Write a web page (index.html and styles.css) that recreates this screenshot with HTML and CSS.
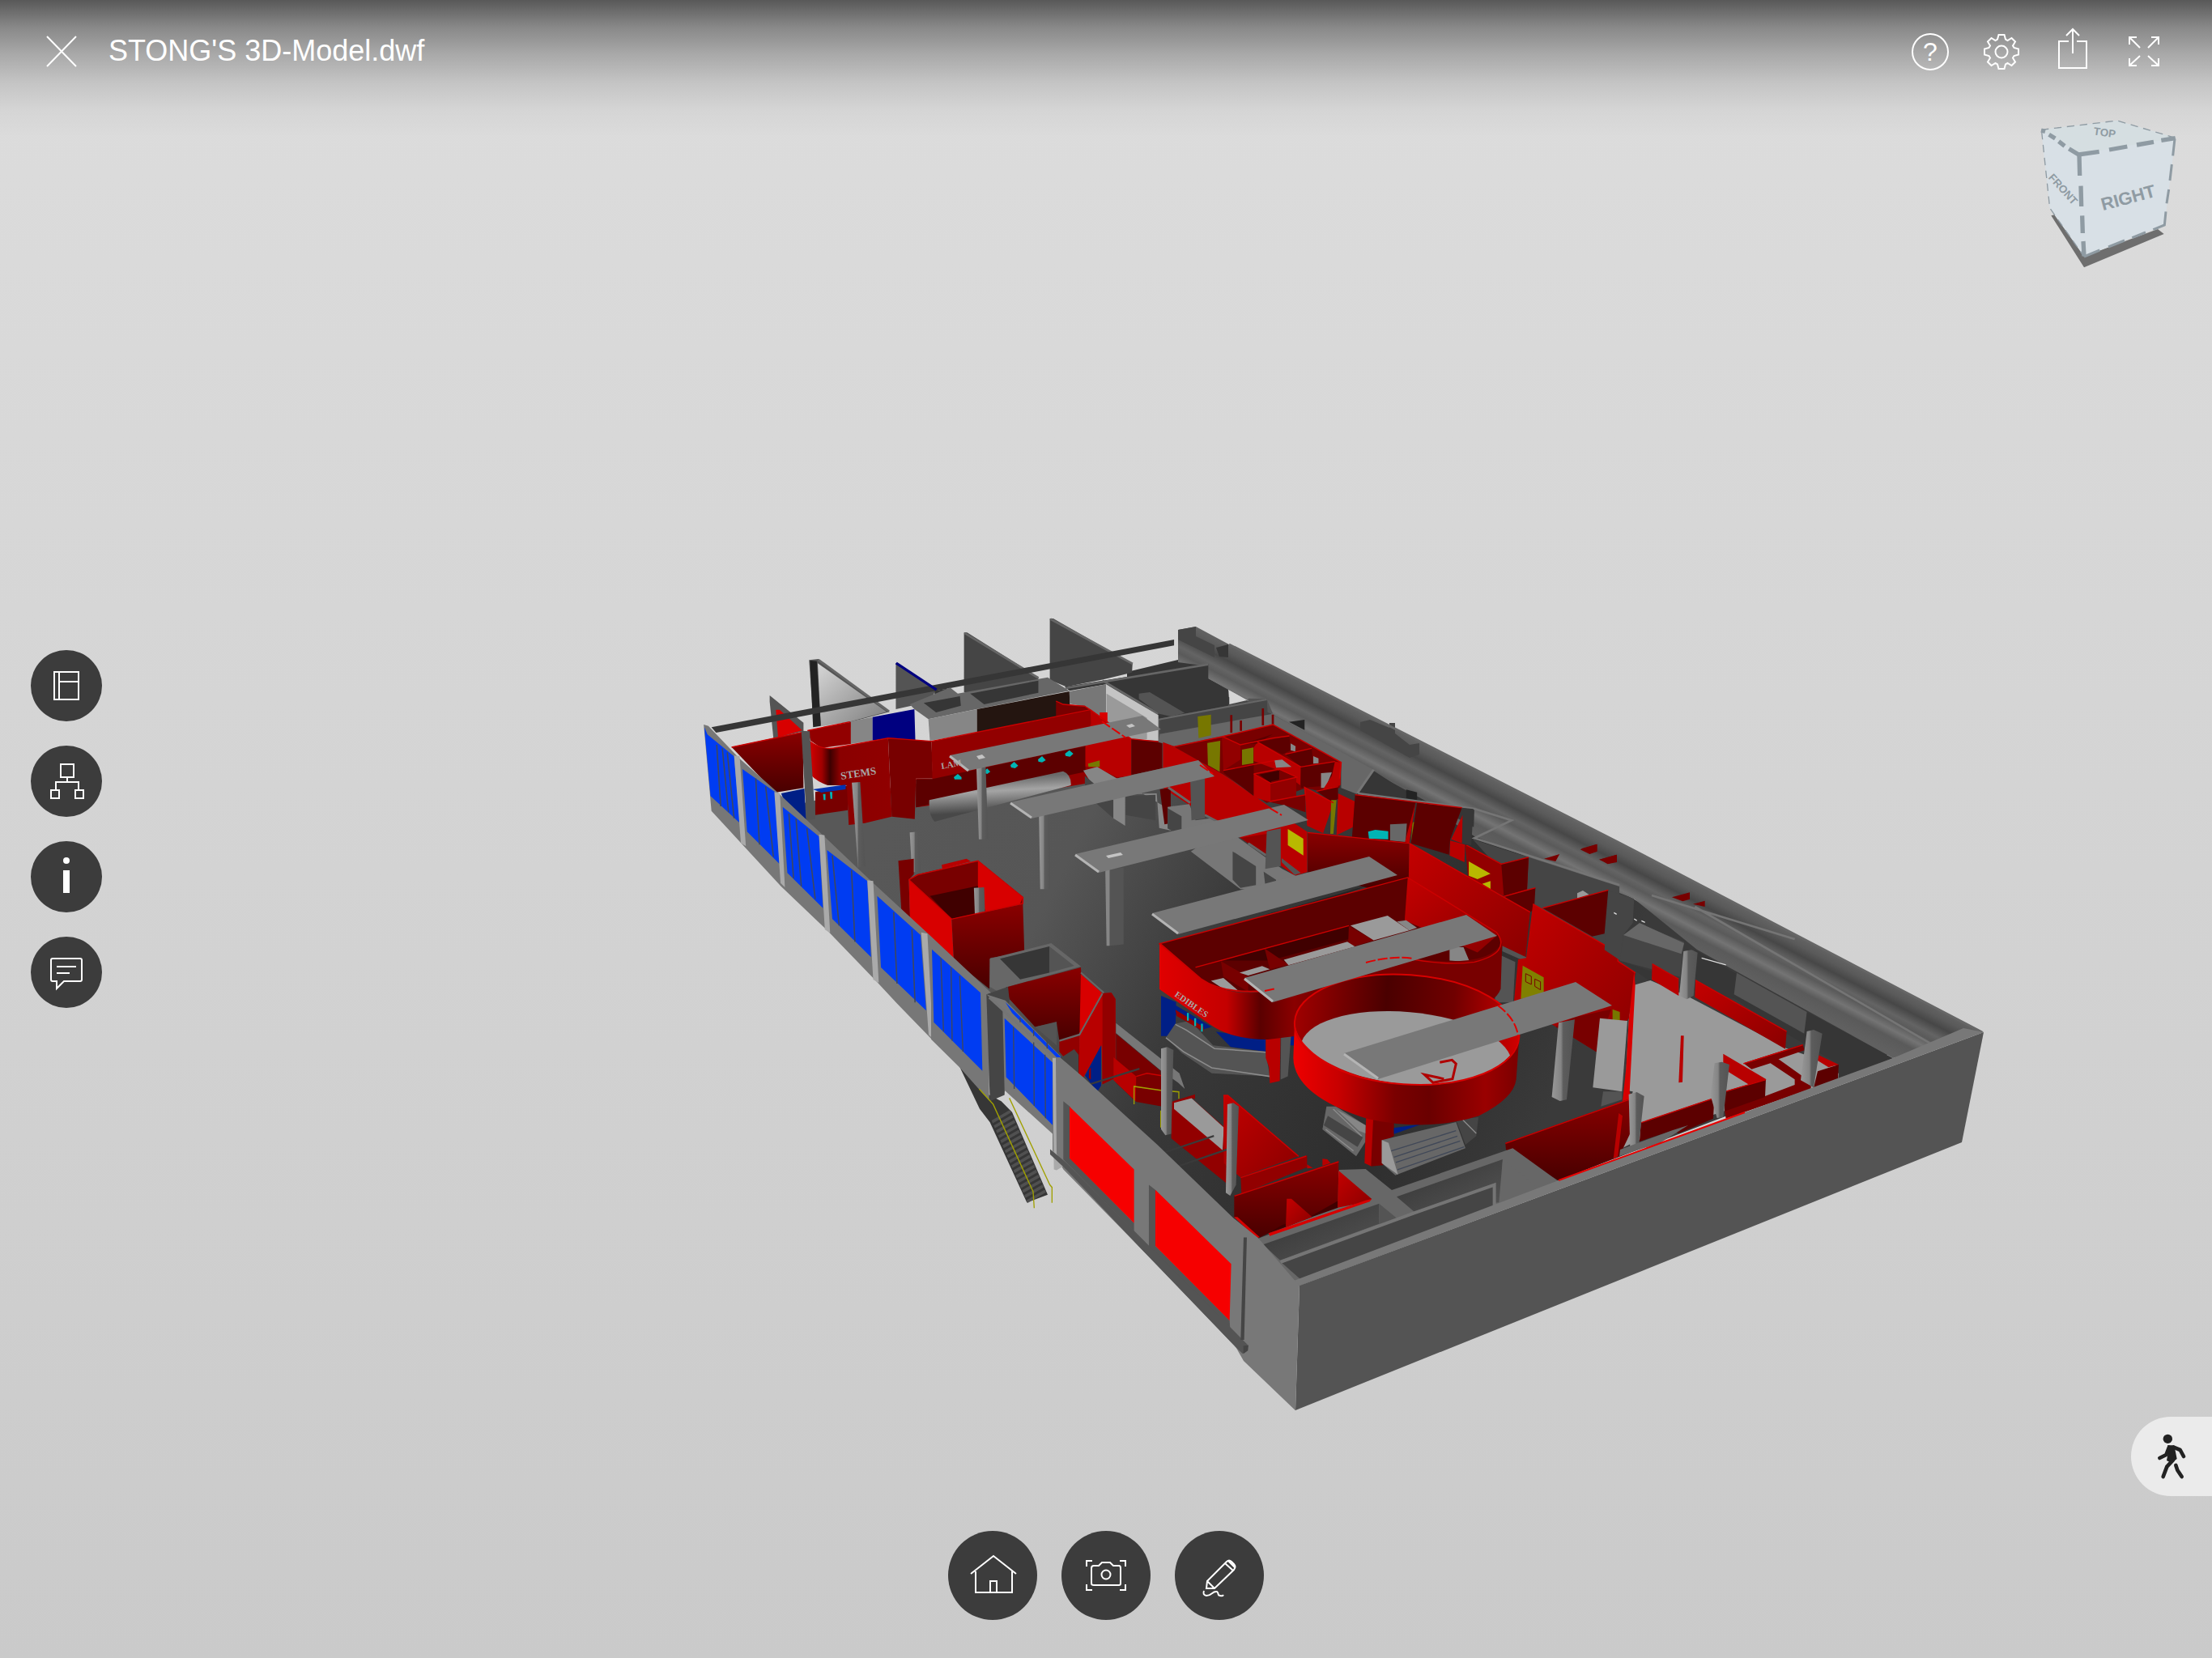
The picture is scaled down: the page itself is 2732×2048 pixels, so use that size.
FILE: index.html
```html
<!DOCTYPE html>
<html lang="en">
<head>
	<meta charset="UTF-8">
	<meta name="viewport" content="width=device-width, initial-scale=1">
	<title>STONG'S 3D-Model.dwf</title>
	<link rel="stylesheet" href="styles.css">
</head>
<body>
<div class="viewer">

<!-- 3D model -->
<svg class="model" viewBox="0 0 2732 2048" role="img" aria-label="3D model of the store">
	<defs>
		<linearGradient id="floor" gradientUnits="userSpaceOnUse" x1="1100" y1="1000" x2="1900" y2="1400">
			<stop offset="0" stop-color="#585858"/><stop offset=".25" stop-color="#565656"/><stop offset=".5" stop-color="#383838"/><stop offset=".8" stop-color="#2e2e2e"/><stop offset="1" stop-color="#3a3a3a"/>
		</linearGradient>
		<linearGradient id="beam" gradientUnits="userSpaceOnUse" x1="1700" y1="889" x2="1666" y2="955">
			<stop offset="0" stop-color="#626262"/><stop offset=".12" stop-color="#5a5a5a"/><stop offset=".26" stop-color="#474747"/><stop offset=".42" stop-color="#646464"/><stop offset=".52" stop-color="#5a5a5a"/><stop offset=".66" stop-color="#747474"/><stop offset=".78" stop-color="#5a5a5a"/><stop offset="1" stop-color="#606060"/>
		</linearGradient>
		<linearGradient id="curve1" x1="0" x2="1" y1="0" y2="0">
			<stop offset="0" stop-color="#d80000"/><stop offset=".16" stop-color="#a00000"/><stop offset=".26" stop-color="#3c0000"/><stop offset=".38" stop-color="#8a0000"/><stop offset="1" stop-color="#900000"/>
		</linearGradient>
		<linearGradient id="curve2" x1="0" x2="1" y1="0" y2="0">
			<stop offset="0" stop-color="#e00000"/><stop offset=".4" stop-color="#c40000"/><stop offset=".6" stop-color="#5a0000"/><stop offset=".8" stop-color="#8a0000"/><stop offset="1" stop-color="#6c0000"/>
		</linearGradient>
		<linearGradient id="ring" x1="0" x2="1" y1="0" y2="0">
			<stop offset="0" stop-color="#ee0000"/><stop offset=".2" stop-color="#c80000"/><stop offset=".45" stop-color="#7a0000"/><stop offset=".6" stop-color="#6a0000"/><stop offset=".85" stop-color="#9a0000"/><stop offset="1" stop-color="#7a0000"/>
		</linearGradient>
		<linearGradient id="ringin" x1="0" x2="1" y1="0" y2="0">
			<stop offset="0" stop-color="#a00000"/><stop offset=".4" stop-color="#4a0000"/><stop offset=".7" stop-color="#700000"/><stop offset="1" stop-color="#d00000"/>
		</linearGradient>
		<linearGradient id="redfall" x1="0" x2="0" y1="0" y2="1">
			<stop offset="0" stop-color="#8a0000"/><stop offset="1" stop-color="#480000"/>
		</linearGradient>
		<linearGradient id="redslope" x1="0" x2="1" y1="0" y2="1">
			<stop offset="0" stop-color="#c40000"/><stop offset="1" stop-color="#8a0000"/>
		</linearGradient>
		<linearGradient id="pipe" x1="0" x2=".15" y1="0" y2="1">
			<stop offset=".2" stop-color="#6a6a6a"/><stop offset=".45" stop-color="#a4a4a4"/><stop offset=".85" stop-color="#484848"/>
		</linearGradient>
		<linearGradient id="post" x1="0" x2="1" y1="0" y2="0">
			<stop offset="0" stop-color="#989898"/><stop offset=".4" stop-color="#848484"/><stop offset=".5" stop-color="#5c5c5c"/><stop offset="1" stop-color="#545454"/>
		</linearGradient>
		<linearGradient id="pane" x1="0" x2="1" y1="0" y2="1">
			<stop offset="0" stop-color="#d6d6d6"/><stop offset="1" stop-color="#7c7c7c"/>
		</linearGradient>
		<linearGradient id="shade" x1="0" x2="1" y1="0" y2="1">
			<stop offset="0" stop-color="#333"/><stop offset="1" stop-color="#555"/>
		</linearGradient>
		<clipPath id="rim"><ellipse cx="563" cy="665" rx="417" ry="203" transform="rotate(4 563 665)"/></clipPath>
	</defs>

	<!-- floor and long wall -->
	<path fill="url(#floor)" d="M930 1010L1000 990L1180 960L1400 900L1455 850L1540 865L1700 940L2000 1100L2338 1300L1950 1448L1605 1588L1540 1520L1290 1300L1100 1150Z"/>
	<path class="g3" d="M1455 778L1492 838L1517 851V872L1460 882L1392 890V830L1455 815Z"/>
	<path fill="url(#beam)" d="M1455 778L1477 774L1518 796L2000 1041L2450 1275L2338 1307L2096 1173L2018 1110L1821 1033L1698 953L1492 838V823L1455 818Z"/>
	<path class="g4" d="M1455 778L1477 774V786L1500 797V812L1455 790Z"/>
	<path class="g3" d="M1502 800L1517 796V812L1506 811Z"/>
	<path class="g4" d="M1680 892L1692 889L1716 899V893L1723 893V906L1741 920L1753 918V932L1741 936L1680 902Z"/>
	<path class="edge6 w3" d="M1518 796L2000 1041L2448 1275"/>

	<!-- north side -->
	<g transform="translate(850 740) scale(.3827 .3333)">
		<path class="g4" d="M1167 72H1178L1434 240L1432 272L1340 298L1220 325L1167 300Z"/>
		<path class="edge6 w8" d="M1169 74L1434 240"/>
		<path class="g4" d="M890 124H900L1130 290L1130 300L900 348L890 345Z"/>
		<path class="edge6 w8" d="M892 126L1130 292"/>
		<path class="g5" d="M670 236V408L780 380L800 335Z"/>
		<path class="g5" d="M390 226L420 222L650 418L525 455L405 470Z"/>
		<path fill="url(#pane)" d="M418 238L640 418L525 453L428 472Z"/>
		<path class="edge6 w8" d="M420 225L648 416"/>
		<path class="g2" d="M393 228L415 230L428 470L403 475Z"/>
		<path class="g5" d="M263 357L372 458V490L275 516L263 380Z"/>
		<path class="rd" d="M283 410L295 410L368 487L290 512Z"/>
		<path class="g3" d="M75 475L1568 150V172L90 495Z"/>
		<path class="navyline" d="M671 237L801 336"/>
		<path class="g3" d="M795 340L835 332V362L795 368Z"/>
		<path class="g6" d="M715 390L845 328L870 350L1160 290L1230 340L930 408L775 445L730 408Z"/>
		<path class="g3" d="M760 385L877 360L880 395L800 420Z"/>
		<path class="g3" d="M910 350L1130 302V347L955 390Z"/>
		<path class="g8" d="M775 445L932 408V495L780 525Z"/>
		<path class="brown" d="M932 408L1230 342L1232 400L1190 440L932 495Z"/>
	</g>
	<g transform="translate(1260 820) scale(.3333)">
		<path class="g3" d="M165 85L697 0V55L772 100L775 150L610 182L515 205L318 76L183 100Z"/>
		<path class="edge6 w8" d="M168 90L697 2M305 62L512 185"/>
		<path class="g5" d="M440 110L480 105L610 182L560 195L515 185L440 130Z"/>
		<path class="g7" d="M183 102L318 76V215L245 158L183 148Z"/>
		<path class="gc" d="M318 76L512 190V285L395 278L318 215Z"/>
		<path class="g9" d="M320 110L470 200V280L395 278L320 215Z"/>
		<path class="sky" d="M775 98L840 135L775 150Z"/>
	</g>
	<g transform="translate(850 740) scale(.3827 .3333)">
		<path fill="url(#redfall)" d="M140 548L370 492L372 700L280 717Z"/>
		<path class="redline" d="M140 549L370 493"/>
		<path class="r9" d="M385 487L525 455V537L430 552L395 525Z"/>
		<path class="g8" d="M525 453L595 437V524L525 537Z"/>
		<path class="bn" d="M595 437L730 408L733 525L645 516L595 524Z"/>
		<path class="r7" d="M410 715L515 690V782L410 800Z"/>
		<path fill="url(#curve1)" d="M388 522Q430 560 470 552L645 515L657 806L570 830L518 837L512 690L450 690Q400 670 392 640Z"/>
		<path class="r7" d="M645 513L785 527L790 665L735 665L731 815L657 806Z"/>
		<path class="r9" d="M785 527L1298 410L1430 518V655L1200 700L735 772V665L788 667Z"/>
		<path class="r5" d="M788 667L1195 565L1282 545V640L735 772V668Z"/>
		<path class="r7" d="M1187 378L1210 390L1280 395L1300 412L1187 437Z"/>
		<path class="rb" d="M1298 410L1430 518V655L1385 660L1320 625L1282 620V545L1300 460Z"/>
		<path class="r5" d="M1430 518L1530 530V628L1430 652Z"/>
		<path class="rd" d="M1328 420H1353V458L1328 440Z"/>
		<path class="redline" d="M388 524Q430 560 470 552L645 515L785 527L1298 410L1430 518L1530 530L1568 550M1187 378L1210 390L1280 397L1300 412M385 487L522 455"/>
		<path class="bd" d="M300 720L375 702L380 817L315 765Z"/>
		<path class="bm" d="M402 705L470 694L508 688V705L430 717Z"/>
		<path class="cy" d="M435 722H443V745H437ZM457 715H465V740H459ZM857 660L870 648L882 660V668H860ZM950 642L965 628L975 640L965 648ZM1040 615L1052 603L1065 617L1055 627L1042 624ZM1129 594L1142 582L1154 597L1142 605L1130 602ZM1216 573L1230 560L1243 573L1232 584L1218 581Z"/>
		<path class="g5" d="M365 488L392 490L410 815L382 818Z"/>
		<path class="yl" d="M1290 610L1328 598V622L1292 622Z"/>
		<path fill="url(#pipe)" d="M778 745L1210 638Q1237 650 1235 690L795 825Q775 800 778 745Z"/>
		<path class="g8" d="M1275 635L1320 622L1568 790V860L1520 848L1512 720L1410 722V840L1372 812Z"/>
		<path class="g4" d="M1412 730L1508 725V820L1412 800ZM1280 655L1372 745V812L1280 720Z"/>
		<path class="g5" d="M1548 770L1568 765V860L1548 850Z"/>
		<path fill="url(#post)" d="M528 680L555 678L572 990L548 995Z"/>
		<path fill="url(#post)" d="M930 620H960L968 890H938Z"/>
		<path fill="url(#post)" d="M1132 800H1165L1168 1075H1136Z"/>
		<path fill="url(#post)" d="M715 865L743 862L750 1015L722 1010Z"/>
		<path class="g5" d="M1360 1000L1405 995V1280L1360 1285Z"/>
		<path class="g8" d="M1346 1000H1360V1285H1350Z"/>
		<path class="r7" d="M678 970L728 962V1020L712 1040L716 1180L688 1155Z"/>
		<path class="rb" d="M818 985L898 962L912 972L820 1000Z"/>
		<path class="r7" d="M712 1040L740 1020L935 970L1080 1105V1130L850 1185Z"/>
		<path class="r3" d="M780 1100L935 1063L990 1150L850 1185Z"/>
		<path class="rd" d="M935 970L1080 1105L1070 1132L960 1160L935 1065Z"/>
		<path fill="url(#post)" d="M922 1070L955 1068L958 1160L925 1168Z"/>
		<path class="rd" d="M712 1038L850 1185L857 1340L716 1190Z"/>
		<path fill="url(#redfall)" d="M850 1185L1080 1130L1085 1310L975 1330L972 1445L857 1338Z"/>
		<path class="redline" d="M712 1040L740 1022L935 970L1080 1105V1128L850 1186L712 1040"/>
		<!-- glass front -->
		<path class="g7" d="M50 465L65 470L165 590L290 718L430 870L590 1045L770 1235L960 1440L1015 1500L940 1710L784 1629L675 1500L610 1420L455 1235L300 1065L175 910L75 785Z"/>
		<path class="bl" d="M52 475L62 502L148 583L167 830L72 730ZM175 630L280 715L295 982L190 862ZM305 770L422 880L435 1145L320 1015ZM448 930L578 1045L590 1327L465 1185ZM610 1100L750 1245L768 1525L622 1365Z"/>
		<path class="mull" d="M92 540L105 768M110 553L130 790M126 568L148 812M218 665L230 910M250 695L275 955M325 795L340 1035M348 815L365 1065M383 850L410 1112M465 950L487 1210M527 1005L538 1270M663 1160L674 1425M722 1225L732 1495"/>
		<path class="ga" d="M148 580L166 582L186 915L170 905ZM278 715L296 720L312 1068L298 1052ZM422 872L440 875L458 1237L441 1225ZM578 1042L597 1045L615 1422L597 1410ZM752 1235L772 1240L790 1630L776 1615Z"/>
	</g>

	<!-- back rooms -->
	<g transform="translate(1400 740) scale(.3827 .3333)">
		<path class="g5" d="M370 368L430 370L450 425L370 400Z"/>
		<path class="g4" d="M85 445L430 370L433 425L85 500Z"/>
		<path class="g6" d="M85 500L450 425V468L130 545L80 530Z"/>
		<path class="edge6 w6" d="M82 446L430 372"/>
		<path class="g6" d="M450 428L775 632L720 722L670 700V605L450 465Z"/>
		<path class="g3" d="M778 645L1098 845L1100 778L915 745L725 720Z"/>
		<path class="g2" d="M880 706L915 716V745L880 738ZM502 455L552 447V485Z"/>
		<path class="edge7 w8" d="M725 720L1100 777L1220 820L1100 886L1260 945L1568 1060M775 632L722 720"/>
		<path class="g4" d="M1095 890L1568 1065V1330L1290 1150L1180 1000Z"/>
		<path class="g3" d="M1060 773L1097 778L1090 912L1060 905Z"/>
		<path class="rb" d="M95 530L130 545L290 650L440 770L560 862V1012L520 1025L430 950L345 885L230 800L95 700Z"/>
		<path class="r5" d="M85 705L120 700V830L100 835Z"/>
		<path class="r7" d="M130 547L285 510L450 465L670 605L665 700L600 712L555 700L430 755L290 650Z"/>
		<path class="r9" d="M285 508L345 540V595L290 635Z"/>
		<path class="rb" d="M400 530L540 622L538 690L480 640L388 600V550Z"/>
		<path class="r5" d="M405 530L503 507L508 560L480 575ZM490 575L575 553L580 610L540 622ZM345 540L450 500L400 535ZM540 622L650 602L640 690L540 700ZM290 635L388 612V730L292 645Z"/>
		<path class="g8" d="M507 535L523 545L522 565L507 560ZM580 582L597 590V608L580 610ZM455 598L480 595L510 622L460 625ZM605 645L640 642L620 700H605Z"/>
		<path class="rb" d="M388 648L443 683V752L388 735ZM650 602L670 605L668 690L610 708L640 655Z"/>
		<path class="r9" d="M443 683L525 660V735L443 752Z"/>
		<path class="r3" d="M405 650L470 635V672L443 682Z"/>
		<path class="r7" d="M470 632L525 660L443 683L445 675L475 668Z"/>
		<path class="r7" d="M440 752L555 725V790L490 765Z"/>
		<path class="rb" d="M552 698L645 755L612 868L560 840ZM660 720L715 750L708 845L655 875Z"/>
		<path class="r5" d="M590 712L660 697V740L640 752Z"/>
		<path class="yl" d="M207 435L250 428V505L210 515ZM238 533L280 525L278 640L240 615ZM350 558L387 550V608L350 615ZM638 745H655L645 870H635ZM900 828L908 825L903 905H896Z"/>
		<path class="r7" d="M312 430H319V495H312ZM414 405H421V468H414ZM343 450H350V488H343ZM446 428H453V465H446Z"/>
		<path class="redline" d="M130 547L285 510L450 465L670 605L665 665M285 508L345 540L450 515L503 507M400 530L540 622L650 602M490 575L575 553M290 635L455 598M388 648L470 630L527 660L443 683L388 648M440 750L555 725L552 698L645 755M590 712L660 695"/>
		<path class="r5" d="M715 725L910 752L890 905L705 885ZM915 755L1060 773L1022 890L1018 947L895 905Z"/>
		<path class="cy" d="M757 862L780 855L822 860V890L760 888Z"/>
		<path class="g6" d="M828 835L882 832L878 900L828 895Z"/>
		<path class="rb" d="M910 755L890 905L876 900ZM1062 800L1060 905L1025 890ZM1022 895L1070 910L1068 975L1020 950Z"/>
		<path class="redline" d="M715 725L910 752L1060 773"/>
		<path class="r9" d="M1070 910L1187 980L1275 957L1270 1080L1195 1100L1080 1035Z"/>
		<path class="r5" d="M1187 982L1275 957L1270 1075L1195 1100ZM1195 1102L1297 1070L1293 1150L1280 1160ZM1320 1145L1532 1078L1520 1240L1480 1250Z"/>
		<path class="yb" d="M1082 972L1152 1018L1110 1038L1082 1025ZM1125 1055L1152 1045V1075Z"/>
		<path class="redline" d="M1075 912L1187 982L1275 957M1195 1102L1297 1070M1320 1145L1532 1078"/>
		<path class="r7" d="M1445 925L1495 908V935L1470 942ZM1505 965L1560 947V975L1530 982ZM1325 962L1375 945L1362 972Z"/>
		<path class="g9" d="M1432 1090L1450 1080L1470 1095L1432 1108Z"/>
		<!-- display shelves below the wall -->
		<path class="g7" d="M110 770L180 760L200 820L250 812L430 960L480 1000L530 1030L460 1080L345 1075L185 935L230 900L110 850Z"/>
		<path class="g4" d="M320 935L395 990V1060L345 1070L320 1040ZM420 1010L460 1040V1060L425 1060ZM110 775L155 805V880L110 850Z"/>
		<path class="r9" d="M345 885L430 870L428 950Z"/>
		<path class="edge6 w8" d="M112 698L183 755M230 800L280 830M370 905L428 950"/>
		<path class="g5" d="M183 670L230 665V812L187 820Z"/>
		<path class="g5" d="M430 860L475 850V990L425 1000Z"/>
		<path class="rb" d="M478 880L500 850L560 862V1012L478 975Z"/>
		<path class="yb" d="M498 852L548 888V950L498 912Z"/>
		<path class="g5" d="M478 960L540 1015L520 1022L478 975Z"/>
		<path fill="url(#redfall)" d="M562 865L890 905L888 1040L760 1072L562 1012Z"/>
		<path class="redline" d="M562 865L890 905"/>
		<path fill="url(#redslope)" d="M890 905L1280 1160L1265 1328L1185 1290L888 1035Z"/>
		<path class="redline" d="M890 905L1280 1160"/>
		<path class="g5" d="M1190 1285L1268 1328V1345L1190 1305Z"/>
		<path class="g5" d="M1185 1320L1232 1345L1225 1495H1165Z"/>
		<path class="g2" d="M400 1180L640 1100L760 1060L640 1110L450 1160Z"/>
	</g>

	<!-- right wing -->
	<g transform="translate(1550 1050) scale(.3333)">
		<path fill="url(#redslope)" d="M1030 200L1345 380V412L1410 455L1385 625L1265 748L1115 655L960 560L975 405L1005 400Z"/>
		<path class="r7" d="M1115 655L1180 620L1320 590L1265 748Z"/>
		<path class="redline" d="M1030 200L1345 380V412L1410 455"/>
		<path class="yb dim" d="M992 428L1070 472V530L985 552Z"/>
		<path class="hollow" d="M1003 458L1024 468V498L1003 488ZM1037 478L1058 488V518L1037 505Z"/>
		<path class="yl" d="M1325 590L1352 600V630H1325Z"/>
	</g>
	<g transform="translate(1950 1000) scale(.3333)">
		<path class="g4" d="M110 300L205 330L200 420L165 465L155 560L95 520Z"/>
		<path class="g3" d="M155 560L270 600L380 640L430 520L585 610L845 750L1165 922L960 1005L965 945L770 830L575 700L270 640Z"/>
		<path class="g5" d="M585 605L845 750L835 830L575 685Z"/>
		<path class="g4" d="M165 465L225 425L390 490L375 620L152 560Z"/>
		<path class="g6" d="M165 465L225 420L390 495L380 535Z"/>
		<path class="edge7 w8" d="M270 318L800 480M430 360L1300 865"/>
		<path class="r7" d="M5 148L68 128V155L40 165ZM75 185L140 167V192L110 200ZM345 325L411 307V332L385 340ZM423 350L467 338V360Z"/>
		<path class="spark" d="M130 382L140 388M205 405L215 412M232 412L245 418M455 550L545 576"/>
		<path class="g9" d="M205 650L265 633L400 690L770 885L960 950L870 1030L690 1065L500 1130L230 1220L150 1260L200 1045L172 1040L185 780Z"/>
		<path class="g9" d="M78 773L180 783L160 1045L52 1030Z"/>
		<path class="g5" d="M90 1045L160 1045V1075L82 1100Z"/>
		<path class="rb" d="M272 572L370 630V690L270 630Z"/>
		<path fill="url(#redslope)" d="M432 632L770 822L765 887L430 695Z"/>
		<path class="redline" d="M272 572L370 628M432 632L770 822"/>
		<path class="rd" d="M205 600L209 650L188 1048L200 1070L162 1080L175 960L185 780Z"/>
		<path class="rb" d="M378 838H389L384 1010L370 1012Z"/>
		<path class="r7" d="M610 940L830 870L836 892L740 925L860 1010V1035L545 1145L540 1115L690 1062L800 1020V1000L710 940L640 962Z"/>
		<path class="r5" d="M885 970L963 945L960 1000L870 1032Z"/>
		<path class="rb" d="M885 908L963 945L925 955L885 930ZM535 905L695 1000L640 1025L535 960Z"/>
		<path class="r5" d="M540 1045L693 1000L690 1065L540 1118ZM230 1160L502 1068L498 1145L370 1200L345 1190L225 1230Z"/>
		<path class="redline" d="M610 942L830 872M540 1046L693 1001M232 1160L502 1069"/>
		<path fill="url(#post)" d="M388 525L418 520L440 530L425 690L400 703L372 690Z"/>
		<path fill="url(#post)" d="M845 822L870 816L902 830L870 1030L822 1003Z"/>
		<path fill="url(#post)" d="M503 940L530 935L558 945L535 1140L512 1143L488 1060Z"/>
	</g>

	<!-- Edibles counter -->
	<g transform="translate(1150 1100) scale(.3333 .3827)">
		<path class="bd" d="M852 340L908 360L905 470L852 470ZM905 370L1040 440L1000 450L905 400ZM1055 455L1240 480V520L1110 505ZM1327 455H1345V500H1327Z"/>
		<path class="g5" d="M905 430L960 420L1045 500L1240 520L1255 600L1040 590L930 525L870 475Z"/>
		<path class="lightline" d="M905 432L945 450L1050 510L1240 522M870 475L935 520L1040 572L1255 600"/>
		<path class="r9" d="M905 385L1010 440L1010 455L910 405Z"/>
		<path class="cy" d="M948 395H955V420H948ZM975 412H982V438H975ZM1000 430H1007V455H1000Z"/>
		<path class="g5" d="M1297 455H1335L1322 600L1295 610Z"/>
		<path class="rb" d="M1240 475L1295 460L1292 615L1255 622L1252 570L1240 540Z"/>
	</g>
	<g transform="translate(1400 740) scale(.3827 .3333)">
		<path class="r5" d="M82 1278L885 1032L1175 1235Q1215 1310 1100 1345Q1000 1360 870 1330L450 1450Q300 1470 230 1420Z"/>
		<path class="r3" d="M200 1365L695 1210V1260L440 1340L290 1340Z"/>
		<path fill="url(#redslope)" d="M885 1032L1180 1240L1110 1310L875 1190Z"/>
		<path class="r7" d="M695 1212L775 1265L700 1290L693 1270ZM423 1295L500 1355L440 1372ZM282 1342L370 1400V1455L290 1400Z"/>
		<path class="g9" d="M700 1210L820 1173L890 1228L775 1265ZM485 1337L690 1270L715 1288L500 1357ZM342 1385L415 1360L440 1372L370 1395ZM250 1415L290 1404L342 1455L290 1445Z"/>
		<path class="g8" d="M850 1195L880 1190L915 1218L890 1228ZM1020 1290H1065L1085 1345L1020 1340Z"/>
		<path class="r7" d="M870 1328Q1150 1375 1190 1270L1185 1445Q1175 1475 1150 1490L600 1490L560 1440Z"/>
		<path class="redline" d="M82 1278L885 1032L1172 1235Q1220 1310 1100 1345Q1000 1360 870 1328M200 1365L695 1210"/>
	</g>
	<path fill="url(#curve2)" d="M1432 1165L1483 1209Q1510 1228 1550 1226L1600 1211L1640 1230V1275L1566 1284Q1520 1284 1494 1265L1432 1222Z"/>
	<path class="redline" d="M1432 1165L1483 1209Q1510 1228 1562 1224"/>

	<!-- round bar -->
	<g transform="translate(1550 1050) scale(.3333)">
		<path class="g6" d="M265 950L300 950L410 1020V1080L375 1135L250 1035Z"/>
		<path class="g4" d="M745 1000L828 990L820 1060L780 1092ZM270 985L400 1065L380 1100L255 1020Z"/>
		<path class="lightline" d="M290 960L395 1060M262 1035L365 1115M770 1000L820 1050"/>
		<path class="g8" d="M300 960L410 1020V1050L385 1040Z"/>
		<path class="rb" d="M412 985L440 1000L432 1172L406 1160Z"/>
		<path class="r7" d="M438 1000L515 1010V1060L475 1080V1168L430 1172Z"/>
		<path class="bd" d="M515 1030L620 1015L515 1052Z"/>
		<ellipse fill="url(#ringin)" cx="563" cy="665" rx="417" ry="203" transform="rotate(4 563 665)"/>
		<g clip-path="url(#rim)"><ellipse class="g9" cx="560" cy="760" rx="392" ry="160" transform="rotate(5 560 760)"/></g>
		<path class="redoutline" d="M685 787L730 778L745 792L732 848L660 862L628 832L700 848"/>
		<path fill="url(#ring)" d="M147 640C160 770 390 870 620 870C820 870 975 790 980 680L968 850Q960 920 830 985Q640 1045 420 997Q145 910 142 770Z"/>
		<ellipse class="redring" cx="563" cy="665" rx="417" ry="203" transform="rotate(4 563 665)"/>
		<path class="g6" d="M470 1075L745 1008L780 1105L520 1205L470 1160Z"/>
		<path class="g9" d="M470 1075L495 1085L530 1203L470 1160Z"/>
		<path class="mull" d="M505 1115L745 1040M515 1138L750 1060M522 1158L760 1078M528 1185L775 1100"/>
		<path fill="url(#post)" d="M1125 640L1185 628L1155 925L1130 930L1100 915Z"/>
		<path fill="url(#redfall)" d="M928 1085L1400 918L1395 1040L1350 1135L1125 1225L930 1110Z"/>
		<path class="rb" d="M1348 975L1362 985L1345 1135L1328 1145Z"/>
		<path class="redline" d="M928 1087L1400 920"/>
		<path fill="url(#post)" d="M1385 905L1415 897L1442 912L1422 1095L1390 1102Z"/>
	</g>

	<!-- ceiling panels -->
	<path class="slab" d="M1173 933L1411 884L1434 901L1196 952ZM1248 991L1480 939L1500 959L1274 1011ZM1328 1055L1586 994L1616 1013L1357 1078ZM1423 1128L1691 1058L1726 1081L1455 1154ZM1537 1208L1811 1130L1849 1156L1572 1238ZM1660 1301L1946 1213L1991 1242L1702 1333Z"/>
	<path class="slabedge" d="M1173 934L1196 952M1248 992L1274 1010M1328 1056L1357 1077M1423 1129L1455 1153M1537 1209L1572 1237M1660 1302L1702 1332"/>
	<path class="gc" d="M1206 934L1213 932L1217 936L1209 938ZM1391 896L1398 894L1402 897L1395 899ZM1366 1057L1384 1053L1387 1056L1369 1060Z"/>
	<path class="redline dash" d="M1361 891L1390 911M1482 945L1498 956M1568 998L1583 1007M1687 1189Q1720 1180 1745 1184M1850 1242Q1872 1258 1875 1280M1562 1224L1576 1221"/>

	<!-- entrance -->
	<g transform="translate(1150 1100) scale(.3333 .3827)">
		<path class="g6" d="M217 220L445 170L555 245L278 312L285 345L217 310Z"/>
		<path class="g3" d="M255 220L438 180V265L330 287Z"/>
		<path class="g5" d="M438 180L530 243L438 265Z"/>
		<path fill="url(#redfall)" d="M278 312L555 248L565 420L550 465L475 485L465 425L385 440L290 350Z"/>
		<path class="g5" d="M385 440L465 423V500Z"/>
		<path class="rd" d="M555 270L635 332L550 465Z"/>
		<path class="r9" d="M475 485L550 465V600L475 520Z"/>
		<path class="rb" d="M635 332L668 330L683 350V605L635 625L632 500L565 602L548 600L550 465Z"/>
		<path class="r9" d="M635 332L668 330L683 350V605L635 625Z"/>
		<path class="edge6 w6" d="M635 332L550 465L475 485M555 265L640 330"/>
		<path class="bd" d="M570 597L630 500V630L615 650Z"/>
		<path class="r9" d="M585 580L592 570V610L585 605Z"/>
		<path class="g7" d="M685 428L920 590L940 640L915 620L850 580L685 460Z"/>
		<path class="r7" d="M685 462L850 582L860 698L760 682L685 620Z"/>
		<path class="rb" d="M676 538L760 600L758 680L676 612Z"/>
		<path class="redline" d="M760 600L800 590L855 598"/>
		<path class="yellowline" d="M752 690V632L850 645L918 650V672M851 710V765"/>
		<path class="r9" d="M890 682L978 658V672L965 670L1095 770V945L890 800Z"/>
		<path class="g9" d="M900 685L965 670L1085 765L1080 838L900 705Z"/>
		<path fill="url(#redslope)" d="M1083 660L1100 660L1362 858L1145 925L1085 880Z"/>
		<path class="redline" d="M1083 662L1100 662L1362 858"/>
		<path class="rod" d="M590 625L772 575M862 846L1048 792M915 890L1105 833"/>
		<path fill="url(#post)" d="M852 510L875 505L898 515L890 785L868 790L852 770Z"/>
		<path fill="url(#post)" d="M1098 690L1120 685L1140 697L1130 950L1108 985L1092 975Z"/>
	</g>

	<!-- south rooms -->
	<g transform="translate(1500 1370) scale(.3333)">
		<path class="g6" d="M462 225L560 222L657 300L1105 145L1275 268L1320 280L315 655L160 480L200 465L400 380Z"/>
		<path class="r9" d="M97 252L343 172V215L100 315Z"/>
		<path class="rb" d="M400 184L418 186L430 200L400 210ZM343 205L365 218L343 220Z"/>
		<path fill="url(#redfall)" d="M73 322L460 193L458 360L200 460L165 477L73 400Z"/>
		<path class="r3" d="M200 460L365 398L458 365V340L360 395L250 430Z"/>
		<path fill="url(#redslope)" d="M460 228L583 333L560 345L456 365Z"/>
		<path fill="url(#redslope)" d="M268 332L285 332L362 400L264 438Z"/>
		<path class="rd" d="M72 400L85 400L168 475L155 478ZM200 460L560 338L583 333L575 343L205 470Z"/>
		<path class="redline" d="M97 254L340 174M74 322L460 195"/>
		<path fill="url(#shade)" d="M180 502L610 350V425L243 560Z"/>
		<path class="g5" d="M610 350L680 408L610 430Z"/>
		<path fill="url(#shade)" d="M675 325L1068 186L1060 345L740 380Z"/>
		<path class="g6" d="M1068 186L1210 300L1053 358Z"/>
		<path class="g4" d="M250 570L740 385L1035 283V365L318 630Z"/>
		<path class="edge7 w12" d="M245 567L740 385L1037 281V362"/>
	</g>

	<!-- outer walls -->
	<path class="g6" d="M2001 1420L2066 1396L2085 1390L2050 1412L2000 1428Z"/>
	<path class="g5" d="M1605 1588L2450 1275L2423 1411L1600 1742Z"/>
	<path class="slab" d="M1598 1582L1925 1458L2338 1307L2425 1270L2450 1275L1605 1588Z"/>
	<path class="redfront" d="M1925 1458L2155 1374"/>
	<g transform="translate(1150 1100) scale(.3333 .3827)">
		<path class="g3" d="M105 568L215 660L260 680L300 715L432 982L355 1007L218 748L180 705Z"/>
		<path class="stairs" d="M258 725L394 996"/>
		<path class="g7" d="M0 155L215 330V678L105 570L0 480Z"/>
		<path class="bl" d="M3 190L183 330L190 582L10 425Z"/>
		<path class="mull" d="M36 218L46 455M74 248L78 485M106 275L118 520"/>
		<path class="g4" d="M205 335L285 310L290 350L272 660L218 680Z"/>
		<path class="g7" d="M205 335L275 355L480 535L450 785L272 645L265 385Z"/>
		<path class="bl" d="M272 412L450 555V757L278 602ZM275 360L482 538H465L300 395Z"/>
		<path class="edge7 w8" d="M215 345L465 545"/>
		<path class="mull" d="M305 440L308 640M380 490L382 695M422 530L424 735M330 410V425M380 450V470M430 485V510"/>
		<path class="g4" d="M480 540L530 512L546 530V600Z"/>
		<path class="slab" d="M450 540L480 540L560 600L840 822L1120 1057L1210 1120L1365 1275L1350 1678L1158 1518L1130 1475L850 1220L760 1140L490 900L450 840Z"/>
		<path class="ga" d="M450 540L462 540L465 850L490 890L465 903L455 900Z"/>
		<path class="g5" d="M490 680L515 698V865L752 1073V1100L490 868ZM807 950L831 966V1147L1106 1388L1108 1412L1090 1410L807 1150Z"/>
		<path class="rf" d="M513 698L752 900V1073L513 864ZM831 966L1112 1205L1106 1388L831 1147Z"/>
		<path class="g5" d="M441 835L500 878L1172 1465V1482L1155 1495L1130 1475L760 1140L500 900L441 852Z"/>
		<path class="g4" d="M1158 1120H1170L1160 1450H1147ZM1157 1470L1176 1467L1174 1485L1157 1495Z"/>
		<path class="yellowline" d="M178 640L230 690L378 972L382 1025M290 670L440 950L448 958V1008"/>
	</g>
	<text class="sign" font-size="13" transform="translate(1039 963) rotate(-9)">STEMS</text>
	<text class="sign" font-size="11" transform="translate(1163 950) rotate(-10)">LAM</text>
	<text class="sign" font-size="11" transform="translate(1450 1230) rotate(35)">EDIBLES</text>
</svg>

<header class="topbar">
	<button class="tool" type="button" aria-label="Close"><svg viewBox="0 0 64 64"><path d="M14 13L50 50M50 13L14 50"/></svg></button>
	<h1 class="title">STONG'S 3D-Model.dwf</h1>
	<button class="tool" type="button" aria-label="Help"><span class="help">?</span></button>
	<button class="tool" type="button" aria-label="Settings"><svg viewBox="-32 -32 64 64"><path d="M-3.500-21H3.500L5-15.500L7.500-14L12.500-17L17-12.500L14-7.500L15.500-5L21-3.500V3.500L15.500 5L14 7.500L17 12.500L12.500 17L7.500 14L5 15.500L3.500 21H-3.500L-5 15.500L-7.500 14L-12.500 17L-17 12.500L-14 7.500L-15.500 5L-21 3.500V-3.500L-15.500-5L-14-7.500L-17-12.500L-12.500-17L-7.500-14L-5-15.500Z"/><circle r="7.500"/></svg></button>
	<button class="tool" type="button" aria-label="Share"><svg viewBox="0 0 64 64"><path d="M27 19H15V52H49V19H37M32 34V4M24 12L32 4L40 12"/></svg></button>
	<button class="tool" type="button" aria-label="Full screen"><svg viewBox="0 0 64 64"><path d="M27 27L14 14M14 23V14H23M37 27L50 14M41 14H50V23M27 37L14 49M14 40V49H23M37 37L50 49M50 40V49H41"/></svg></button>
</header>

<nav class="sidebar" aria-label="Panels">
	<button class="round" type="button" aria-label="Sheets"><svg viewBox="0 0 88 88"><path d="M29 27H59V61H29ZM35 27V61M35 39H59"/></svg></button>
	<button class="round" type="button" aria-label="Model tree"><svg viewBox="0 0 88 88"><path d="M37 23H53V39H37ZM45 39V45M31 54V45H59V54M25 55H35V65H25ZM55 55H65V65H55Z"/></svg></button>
	<button class="round" type="button" aria-label="Properties"><svg viewBox="0 0 88 88"><g class="solid"><circle cx="44" cy="24" r="4"/><path d="M40 36H48V64H40Z"/></g></svg></button>
	<button class="round" type="button" aria-label="Comments"><svg viewBox="0 0 88 88"><path d="M27 27H61Q63 27 63 29V53Q63 55 61 55H41L32 64V55H27Q25 55 25 53V29Q25 27 27 27ZM32 37H56M32 45H48"/></svg></button>
</nav>

<aside class="side">
	<button class="cube" type="button" aria-label="View cube">
		<svg viewBox="600 445 510 555">
			<path class="shadow" d="M640 800L652 797L765 950L1035 850L1058 868L762 992Z"/>
			<path class="face" d="M603 482L885 448L1100 512L1060 835L762 952L635 772Z"/>
			<path class="topface" d="M603 482L885 448L1100 512L745 572Z"/>
			<g class="edges">
				<path class="thin" d="M603 482L885 448L1100 512"/>
				<path class="thin" d="M605 490L635 772L762 952"/>
				<path class="thick" d="M603 484L618 488M632 500L655 514M668 525L690 542M706 552L742 574L818 563M855 556L922 544M957 538L1020 527M1048 521L1100 513"/>
				<path class="thick" d="M744 575L746 652M750 690L752 766M755 800L757 865M759 895L762 950"/>
				<path class="mid" d="M1098 515L1091 578M1087 610L1080 670M1076 703L1068 755M1065 785L1060 835L1018 852M990 862L940 882M912 892L852 916M820 928L762 952"/>
			</g>
			<text font-size="66" transform="translate(832 782) rotate(-15)">RIGHT</text>
			<text font-size="40" transform="translate(628 660) rotate(48)">FRONT</text>
			<text font-size="40" transform="translate(796 500) rotate(8)">TOP</text>
		</svg>
	</button>
	<button class="walk" type="button" aria-label="First person view">
		<svg viewBox="96 90 300 294">
			<circle cx="232" cy="172" r="17"/>
			<path d="M231 196H256L266 246L246 262L228 252L233 225Z"/>
			<path class="limb" d="M237 203L226 231L202 243M254 203L278 213L291 237M252 250L229 275L215 312M262 270L268 288L284 312"/>
		</svg>
	</button>
</aside>

<footer class="dock">
	<button class="round big" type="button" aria-label="Home view"><svg viewBox="0 0 110 110"><path d="M28 53L56 31L84 53M34 50V76H79V50M52 76V62H60V76"/></svg></button>
	<button class="round big" type="button" aria-label="Snapshot"><svg viewBox="0 0 110 110"><path d="M31 44V37H38M72 37H79V44M31 66V73H38M72 73H79V66M40 43H46L50 39H60L64 43H71Q73 43 73 46V65Q73 67 71 67H40Q37 67 37 65V46Q37 43 40 43Z"/><circle cx="55" cy="54" r="5.500"/></svg></button>
	<button class="round big" type="button" aria-label="Markup"><svg viewBox="0 0 110 110"><path d="M40 62L64 38Q67 35 70 38L73 41Q76 44 73 48L49 71H39ZM40 62L49 71M62 40L72 49M66 37L74 45"/><path d="M36 74Q34 79 39 80C46 80 46 74 52 75C55 77 52 80 56 80Q59 81 60 79"/></svg></button>
</footer>

</div>
</body>
</html>
```
FILE: styles.css
```css
* {
	margin: 0;
	padding: 0;
	box-sizing: border-box;
}
body {
	font-family: "Liberation Sans", Arial, sans-serif;
	background: #cacaca;
}
button {
	border: 0;
	background: none;
	font: inherit;
	color: inherit;
	cursor: pointer;
}
svg {
	display: block;
}
.viewer {
	position: relative;
	min-height: 100vh;
	display: grid;
	grid-template-columns: auto 1fr auto;
	grid-template-rows: auto 1fr auto;
	overflow: hidden;
	background:
		linear-gradient(rgba(0,0,0,.6), rgba(0,0,0,.38) 20%, rgba(0,0,0,.23) 40%, rgba(0,0,0,.11) 60%, rgba(0,0,0,.03) 80%, transparent) 0 0 / 100% 170px no-repeat,
		linear-gradient(#dddddd, #cacaca);
}

/* controls */
.topbar {
	grid-area: 1 / 1 / 2 / -1;
	display: flex;
	align-items: center;
	gap: 24px;
	padding: 32px 52px 32px 44px;
	color: #fff;
	z-index: 1;
}
.title {
	flex: 1;
	padding: 0 0 2px 2px;
	font-size: 36px;
	line-height: 44px;
	font-weight: normal;
}
.tool {
	width: 64px;
	height: 64px;
}
.tool svg, .round svg {
	width: 100%;
	height: 100%;
	fill: none;
	stroke: #fff;
	stroke-width: 2;
}
.help {
	display: block;
	width: 46px;
	height: 46px;
	margin: 0 auto;
	border: 2px solid #fff;
	border-radius: 50%;
	font-size: 32px;
	line-height: 42px;
}
.round {
	width: 88px;
	height: 88px;
	border-radius: 50%;
	background: #3c3c3c;
}
.round.big {
	width: 110px;
	height: 110px;
}
.round .solid {
	fill: #fff;
	stroke: none;
}
.sidebar {
	grid-area: 1 / 1 / -1 / 2;
	align-self: center;
	display: flex;
	flex-direction: column;
	gap: 30px;
	padding-left: 38px;
	z-index: 1;
}
.side {
	grid-area: 2 / 3 / -1 / 4;
	display: flex;
	flex-direction: column;
	align-items: flex-end;
	justify-content: space-between;
	padding: 20px 0 200px;
	z-index: 1;
}
.dock {
	grid-area: 3 / 1 / 4 / -1;
	justify-self: center;
	display: flex;
	gap: 30px;
	padding-bottom: 47px;
	z-index: 1;
}

/* view cube */
.cube {
	width: 170px;
	margin-right: 42px;
}
.cube .shadow { fill: #6e6e6e; }
.cube .face { fill: #d8e0e6; }
.cube .topface { fill: #d5dee1; }
.cube text {
	fill: #8f9ba3;
	font-weight: bold;
}
.cube .edges path {
	fill: none;
	stroke: #8f9ba3;
}
.cube .edges .thin {
	stroke-width: 4;
	stroke-dasharray: 28 20;
}
.cube .edges .mid { stroke-width: 9; }
.cube .edges .thick { stroke-width: 16; }

.walk {
	width: 100px;
	height: 98px;
	border-radius: 49px 0 0 49px;
	background: #ebebeb;
}
.walk svg { fill: #222; }
.walk .limb {
	fill: none;
	stroke: #222;
	stroke-width: 14;
	stroke-linecap: round;
	stroke-linejoin: round;
}

/* model */
.model {
	position: absolute;
	top: 0;
	left: 0;
	width: 100%;
	height: 100%;
}
.g2 { fill: #232323; }
.g3 { fill: #363636; }
.g4 { fill: #454545; }
.g5 { fill: #545454; }
.g6 { fill: #676767; }
.g7 { fill: #777; }
.g8 { fill: #868686; }
.g9 { fill: #9a9a9a; }
.ga { fill: #aaa; }
.gc { fill: #c4c4c4; }
.sky { fill: #d6d6d6; }
.slab { fill: #787878; }
.r3 { fill: #400000; }
.r5 { fill: #5c0000; }
.r7 { fill: #780000; }
.r9 { fill: #920000; }
.rb { fill: #b80000; }
.rd { fill: #d80000; }
.rf { fill: #f60000; }
.bl { fill: #003cf2; }
.bm { fill: #0030b0; }
.bd { fill: #001f86; }
.bn { fill: #000080; }
.brown { fill: #241510; }
.cy { fill: #00b4b4; }
.yl { fill: #777700; }
.yb { fill: #b8b800; }
.yb.dim { fill: #808000; }
.edge6, .edge7, .slabedge, .navyline, .redline, .redring, .redoutline, .redfront, .mull, .rod, .lightline, .yellowline, .spark, .hollow, .stairs {
	fill: none;
	stroke-width: 4;
}
.edge6 { stroke: #666; }
.edge7 { stroke: #757575; }
.w3 { stroke-width: 3; }
.w6 { stroke-width: 6; }
.w8 { stroke-width: 8; }
.w12 { stroke-width: 12; }
.slabedge { stroke: #b4b4b4; stroke-width: 3; }
.navyline { stroke: #000080; stroke-width: 9; }
.redline { stroke: #cc0000; }
.redline.dash { stroke: #e00000; stroke-width: 2; stroke-dasharray: 12 3; }
.model > .redline { stroke-width: 2; }
.redring { stroke: #d80000; stroke-width: 6; }
.redoutline { stroke: #b00000; stroke-width: 9; }
.redfront { stroke: #e80000; stroke-width: 2; }
.mull { stroke: #404858; }
.rod { stroke: #3a3a3a; stroke-width: 6; }
.lightline { stroke: #8c8c8c; }
.yellowline { stroke: #a0a000; }
.spark { stroke: #ddd; }
.hollow { stroke: #780000; stroke-width: 3; }
.stairs { stroke: #505050; stroke-width: 76; stroke-dasharray: 10 8; }
.sign {
	font-family: "Liberation Serif", serif;
	font-weight: bold;
	fill: #a8a8a8;
}
```
